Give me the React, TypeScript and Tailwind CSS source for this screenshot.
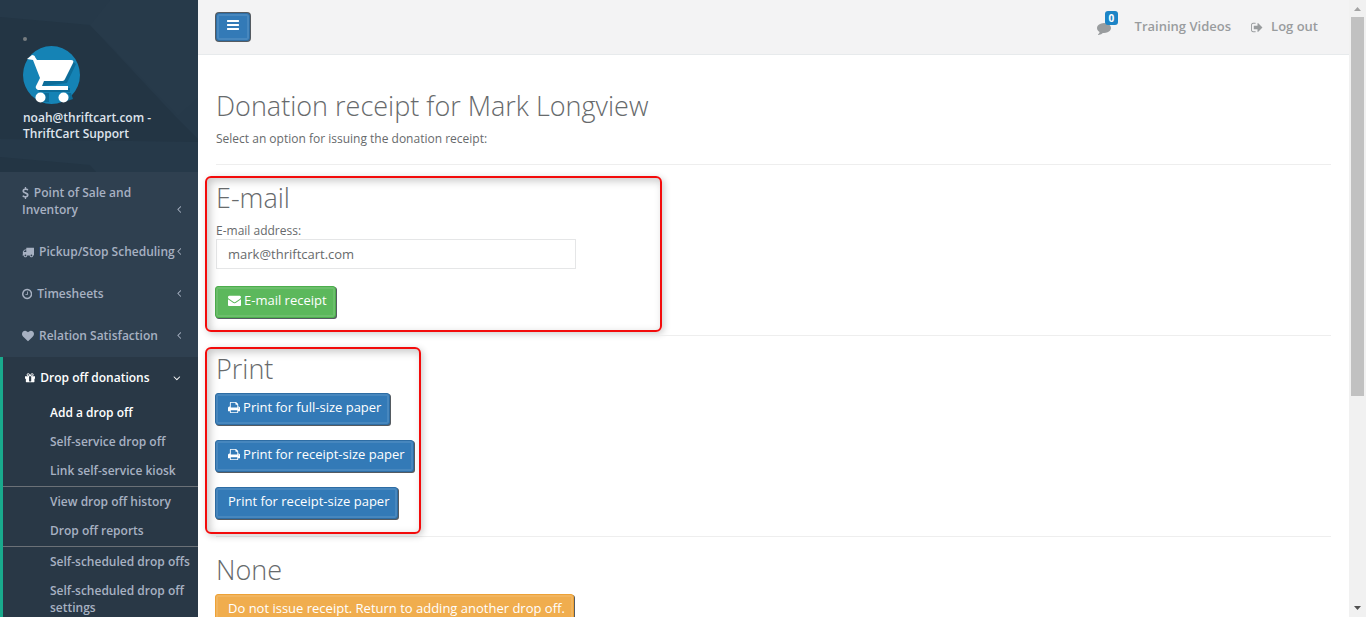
import React, { useState } from "react";
import clsx from "clsx";

// Icon outlines on a 1792 unit em, "x" and "w" crop each one to its own advance width
const ICONS = {
  dollar: {
    x: 384,
    w: 1024,
    d: "M1362 1185q0 153-99.5 263.5t-258.5 136.5v175q0 14-9 23t-23 9h-135q-13 0-22.5-9.5t-9.5-22.5v-175q-66-9-127.5-31t-101.5-44.5-74-48-46.5-37.5-17.5-18q-17-21-2-41l103-135q7-10 23-12 15-2 24 9l2 2q113 99 243 125 37 8 74 8 81 0 142.5-43t61.5-122q0-28-15-53t-33.5-42-58.5-37.5-66-32-80-32.5q-39-16-61.5-25t-61.5-26.5-62.5-31-56.5-35.5-53.5-42.5-43.5-49-35.5-58-21-66.5-8.5-78q0-138 98-242t255-134v-180q0-13 9.5-22.5t22.5-9.5h135q14 0 23 9t9 23v176q57 6 110.5 23t87 33.5 63.5 37.5 39 29 15 14q17 18 5 38l-81 146q-8 15-23 16-14 3-27-7-3-3-14.5-12t-39-26.5-58.5-32-74.5-26-85.5-11.5q-95 0-155 43t-60 111q0 26 8.5 48t29.5 41.5 39.5 33 56 31 60.5 27 70 27.5q53 20 81 31.5t76 35 75.5 42.5 62 50 53 63.5 31.5 76.5 13 94z",
  },
  truck: {
    x: 0,
    w: 1792,
    d: "M640 1408q0-52-38-90t-90-38-90 38-38 90 38 90 90 38 90-38 38-90zm-384-512h384v-256h-158q-13 0-22 9l-195 195q-9 9-9 22v30zm1280 512q0-52-38-90t-90-38-90 38-38 90 38 90 90 38 90-38 38-90zm256-1088v1024q0 15-4 26.5t-13.5 18.5-16.5 11.5-23.5 6-22.5 2-25.5 0-22.5-.5q0 106-75 181t-181 75-181-75-75-181h-384q0 106-75 181t-181 75-181-75-75-181h-64q-3 0-22.5.5t-25.5 0-22.5-2-23.5-6-16.5-11.5-13.5-18.5-4-26.5q0-26 19-45t45-19v-320q0-8-.5-35t0-38 2.5-34.5 6.5-37 14-30.5 22.5-30l198-198q19-19 50.5-32t58.5-13h160v-192q0-26 19-45t45-19h1024q26 0 45 19t19 45z",
  },
  clock: {
    x: 128,
    w: 1536,
    d: "M1024 544v448q0 14-9 23t-23 9h-320q-14 0-23-9t-9-23v-64q0-14 9-23t23-9h224v-352q0-14 9-23t23-9h64q14 0 23 9t9 23zm416 352q0-148-73-273t-198-198-273-73-273 73-198 198-73 273 73 273 198 198 273 73 273-73 198-198 73-273zm224 0q0 209-103 385.5t-279.5 279.5-385.5 103-385.5-103-279.5-279.5-103-385.5 103-385.5 279.5-279.5 385.5-103 385.5 103 279.5 279.5 103 385.5z",
  },
  heart: {
    x: 0,
    w: 1792,
    d: "M896 1664q-26 0-44-18l-624-602q-10-8-27.5-26t-55.5-65.5-68-97.5-53.5-121-23.5-138q0-220 127-344t351-124q62 0 126.5 21.5t120 58 95.5 68.5 76 68q36-36 76-68t95.5-68.5 120-58 126.5-21.5q224 0 351 124t127 344q0 221-229 450l-623 600q-18 18-44 18z",
  },
  gift: {
    x: 128,
    w: 1536,
    d: "M1056 1356v-716h-320v716q0 25 18 38.5t46 13.5h192q28 0 46-13.5t18-38.5zm-456-844h195l-126-161q-26-31-69-31-40 0-68 28t-28 68 28 68 68 28zm688-96q0-40-28-68t-68-28q-43 0-69 31l-125 161h194q40 0 68-28t28-68zm376 256v320q0 14-9 23t-23 9h-96v416q0 40-28 68t-68 28h-1088q-40 0-68-28t-28-68v-416h-96q-14 0-23-9t-9-23v-320q0-14 9-23t23-9h440q-93 0-158.5-65.5t-65.5-158.5 65.5-158.5 158.5-65.5q107 0 168 77l128 165 128-165q61-77 168-77 93 0 158.5 65.5t65.5 158.5-65.5 158.5-158.5 65.5h440q14 0 23 9t9 23z",
  },
  envelope: {
    x: 0,
    w: 1792,
    d: "M1792 710v794q0 66-47 113t-113 47h-1472q-66 0-113-47t-47-113v-794q44 49 101 87 362 246 497 345 57 42 92.5 65.5t94.5 48 110 24.5h2q51 0 110-24.5t94.5-48 92.5-65.5q170-123 498-345 57-39 100-87zm0-294q0 79-49 151t-122 123q-376 261-468 325-10 7-42.5 31t-54 38.5-52 32.5-57.5 27-50 9h-2q-23 0-50-9t-57.5-27-52-32.5-54-38.5-42.5-31q-91-64-262-182.5t-205-142.5q-62-42-117-115.5t-55-136.5q0-78 41.5-130t118.5-52h1472q65 0 112.5 47t47.5 113z",
  },
  print: {
    x: 64,
    w: 1664,
    d: "M448 1536h896v-256h-896v256zm0-640h896v-384h-160q-40 0-68-28t-28-68v-160h-640v640zm1152 64q0-26-19-45t-45-19-45 19-19 45 19 45 45 19 45-19 19-45zm128 0v416q0 13-9.5 22.5t-22.5 9.5h-224v160q0 40-28 68t-68 28h-960q-40 0-68-28t-28-68v-160h-224q-13 0-22.5-9.5t-9.5-22.5v-416q0-79 56.5-135.5t135.5-56.5h64v-544q0-40 28-68t68-28h672q40 0 88 20t76 48l152 152q28 28 48 76t20 88v256h64q79 0 135.5 56.5t56.5 135.5z",
  },
  signOut: {
    x: 64,
    w: 1664,
    d: "M704 1440q0 4 1 20t.5 26.5-3 23.5-10 19.5-20.5 6.5h-320q-119 0-203.5-84.5t-84.5-203.5v-704q0-119 84.5-203.5t203.5-84.5h320q13 0 22.5 9.5t9.5 22.5q0 4 1 20t.5 26.5-3 23.5-10 19.5-20.5 6.5h-320q-66 0-113 47t-47 113v704q0 66 47 113t113 47h312l11.5 1 11.5 3 8 5.5 7 9 2 13.5zm928-544q0 26-19 45l-544 544q-19 19-45 19t-45-19-19-45v-288h-448q-26 0-45-19t-19-45v-384q0-26 19-45t45-19h448v-288q0-26 19-45t45-19 45 19l544 544q19 19 19 45z",
  },
  comment: {
    x: 0,
    w: 1792,
    d: "M1792 896q0 174-120 321.5t-326 233-450 85.5q-70 0-145-8-198 175-460 242-49 14-114 22-17 2-30.5-9t-17.5-29v-1q-3-4-.5-12t2-10 4.5-9.5l6-9 7-8.5 8-9q7-8 31-34.5t34.5-38 31-39.5 32.5-51 27-59 26-76q-157-89-247.5-220t-90.5-281q0-130 71-248.5t191-204.5 286-136.5 348-50.5q244 0 450 85.5t326 233 120 321.5z",
  },
  bars: {
    x: 128,
    w: 1536,
    d: "M1664 1344v128q0 26-19 45t-45 19h-1408q-26 0-45-19t-19-45v-128q0-26 19-45t45-19h1408q26 0 45 19t19 45zm0-512v128q0 26-19 45t-45 19h-1408q-26 0-45-19t-19-45v-128q0-26 19-45t45-19h1408q26 0 45 19t19 45zm0-512v128q0 26-19 45t-45 19h-1408q-26 0-45-19t-19-45v-128q0-26 19-45t45-19h1408q26 0 45 19t19 45z",
  },
  angleLeft: {
    x: 576,
    w: 640,
    d: "M1203 544q0 13-10 23l-393 393 393 393q10 10 10 23t-10 23l-50 50q-10 10-23 10t-23-10l-466-466q-10-10-10-23t10-23l466-466q10-10 23-10t23 10l50 50q10 10 10 23z",
  },
  angleDown: {
    x: 320,
    w: 1152,
    d: "M1395 736q0 13-10 23l-466 466q-10 10-23 10t-23-10l-466-466q-10-10-10-23t10-23l50-50q10-10 23-10t23 10l393 393 393-393q10-10 23-10t23 10l50 50q10 10 10 23z",
  },
};

type IconName = keyof typeof ICONS;

function Icon({ name, className }: { name: IconName; className?: string }) {
  const icon = ICONS[name];
  return (
    <svg viewBox={`${icon.x} 0 ${icon.w} 1792`} className={clsx("inline-block w-auto shrink-0 fill-current", className)} aria-hidden="true">
      <path d={icon.d} />
    </svg>
  );
}

const navItems: { icon: IconName; label: string }[] = [
  { icon: "dollar", label: "Point of Sale and Inventory" },
  { icon: "truck", label: "Pickup/Stop Scheduling" },
  { icon: "clock", label: "Timesheets" },
  { icon: "heart", label: "Relation Satisfaction" },
];

const subItems = [
  { label: "Add a drop off", active: true },
  { label: "Self-service drop off" },
  { label: "Link self-service kiosk", divider: true },
  { label: "View drop off history" },
  { label: "Drop off reports", divider: true },
  { label: "Self-scheduled drop offs" },
  { label: "Self-scheduled drop off settings" },
];

function Logo() {
  return (
    <svg viewBox="0 0 57 58" className="h-[58px] w-[57px]" role="img" aria-label="ThriftCart">
      <ellipse cx="28.5" cy="29" rx="28.5" ry="29" fill="#1583b5" />
      <path d="M49 15l4 3-9 19-24 3 1 2h26v4H16l-2-6 6-5z" fill="#0d6c98" />
      <path d="M17 56l6-5-2-4h5v9zM41 56l6-6-3-3h4l2 6z" fill="#0d6c98" />
      <path
        d="M4 13L9 9c2 0 3 1 3 2l2 3h34c2 0 3 1 2 3l-8 16c-1 2-2 2-4 2H21l-2 5h26v4H16c-2 0-4-2-3-4l4-8-7-18z"
        fill="#fff"
      />
      <circle cx="17.500" cy="51.500" r="5" fill="#fff" />
      <circle cx="40.500" cy="51.500" r="5" fill="#fff" />
    </svg>
  );
}

function Sidebar() {
  return (
    <nav className="w-[198px] shrink-0 overflow-hidden bg-[#2f4050] text-[12px] leading-[17px] font-semibold text-[#a7b1c2]">
      <div className="relative bg-[#263949] px-[23px] pt-[46px] pb-[30px]">
        {/* faceted backdrop */}
        <svg viewBox="0 0 198 172" preserveAspectRatio="none" className="absolute inset-0 h-full w-full" aria-hidden="true">
          <path d="M0 17L90 25 175 116 198 139V142L0 139z" fill="#233544" />
          <path d="M90 25L110 0H198V98L178 116z" fill="#273a4a" />
          <path d="M0 157L90 165 96 172H0z" fill="#233544" />
          <circle cx="25" cy="39" r="2" fill="#777c80" />
        </svg>
        <div className="relative">
          <Logo />
          <a href="#profile" className="mt-[6px] block leading-4 text-[#dfe4ed]">
            noah@thriftcart.com -
            <br />
            ThriftCart Support
          </a>
        </div>
      </div>
      <ul>
        {navItems.map((item) => (
          <li key={item.label}>
            <a href="#menu" className="flex items-end pt-3 pr-[17px] pb-[13px] pl-[22px]">
              <span className="-mr-1 flex-1">
                <Icon name={item.icon} className="mr-[5px] h-3 align-[-2px]" />
                {item.label}
              </span>
              <Icon name="angleLeft" className="mb-[3px] h-3" />
            </a>
          </li>
        ))}
        <li className="border-l-3 border-[#19aa8d] bg-[#293846]">
          <a href="#drop-off" className="flex items-center py-3 pr-[17px] pl-[22px] text-white">
            <span className="flex-1">
              <Icon name="gift" className="mr-[5px] h-3 align-[-2px]" />
              Drop off donations
            </span>
            <Icon name="angleDown" className="h-3" />
          </a>
          <ul>
            {subItems.map((item) => (
              <li key={item.label} className={clsx(item.divider && "border-b border-[#6b7177] pb-px")}>
                <a href="#drop-off" className={clsx("block py-1.5 pr-1 pl-[47px]", item.active && "text-white")}>
                  {item.label}
                </a>
              </li>
            ))}
          </ul>
        </li>
      </ul>
    </nav>
  );
}

const buttonColors = {
  primary: "border-[#2e6da4] bg-[#337ab7]",
  success: "border-[#4cae4c] bg-[#5cb85c]",
  warning: "border-[#eea236] bg-[#f0ad4e]",
};

interface ActionButtonProps {
  color: keyof typeof buttonColors;
  icon?: IconName;
  children: React.ReactNode;
}

function ActionButton({ color, icon, children }: ActionButtonProps) {
  return (
    <button
      type="button"
      className={clsx(
        "-ml-px flex h-8 items-center gap-[3px] rounded-[3px] border pr-2 pb-[3px] pl-3 text-[13px] whitespace-nowrap text-white shadow-[inset_0_0_0_2px_rgba(255,255,255,0.1),1px_1px_0_#555b61]",
        buttonColors[color]
      )}
    >
      {icon && <Icon name={icon} className="h-[13px]" />}
      {children}
    </button>
  );
}

// Red frame drawn over a section
function Highlight({ className }: { className: string }) {
  return (
    <div
      className={clsx(
        "pointer-events-none absolute top-[11px] -left-[11px] rounded-md border-2 border-[#f30b0b] shadow-[2px_2px_7px_rgba(0,0,0,0.2),inset_3px_3px_8px_rgba(0,0,0,0.22)]",
        className
      )}
    />
  );
}

function Scrollbar() {
  return (
    <div className="flex w-[17px] shrink-0 flex-col items-center bg-[#f1f1f1]" aria-hidden="true">
      <svg viewBox="0 0 17 17" className="h-[17px] w-[17px] shrink-0">
        <path d="M5 11h7L8.500 7z" fill="#a3a3a3" />
      </svg>
      <div className="w-[13px] flex-[379] bg-[#c1c1c1]" />
      <div className="flex-[204]" />
      <svg viewBox="0 0 17 17" className="h-[17px] w-[17px] shrink-0">
        <path d="M5 6h7L8.500 10z" fill="#505050" />
      </svg>
    </div>
  );
}

export default function App() {
  const [email, setEmail] = useState("mark@thriftcart.com");

  return (
    <div className="flex h-screen overflow-hidden bg-white font-['Open_Sans',sans-serif] text-[12px] text-[#676a6c]">
      <Sidebar />
      <div className="min-w-0 flex-1 overflow-hidden">
        {/* Top bar */}
        <header className="flex h-[55px] items-center justify-between border-b border-[#e7eaec] bg-[#f3f3f4] pr-[31px] pl-[18px]">
          <button
            type="button"
            aria-label="Toggle menu"
            className="flex h-7 w-[34px] items-center justify-center rounded-[3px] border border-[#2e6da4] bg-[#337ab7] pb-1 text-white shadow-[inset_0_0_0_2px_rgba(255,255,255,0.1),0_0_0_1px_#555b61]"
          >
            <Icon name="bars" className="h-[14px]" />
          </button>
          <div className="flex items-center text-[13px] font-semibold text-[#999c9e]">
            <a href="#messages" aria-label="Messages" className="relative mr-6">
              <Icon name="comment" className="block h-[14px]" />
              <span className="absolute -top-2.5 left-2 mt-1 rounded-[3px] bg-[#1c84c6] px-1 text-[10px] leading-[14px] font-bold text-white">0</span>
            </a>
            <a href="#videos">Training Videos</a>
            <a href="#logout" className="ml-5 flex items-center gap-2">
              <Icon name="signOut" className="h-[13px]" />
              Log out
            </a>
          </div>
        </header>

        <main className="pt-[34px] pr-[18px] pl-[18px]">
          <h1 className="text-[27px] leading-[34px] font-light">Donation receipt for Mark Longview</h1>
          <p className="mt-[7px] leading-[18px]">Select an option for issuing the donation receipt:</p>

          {/* E-mail */}
          <section className="relative mt-4 h-[171px] border-t border-[#eee] pt-4">
            <h2 className="text-[27px] leading-[34px] font-light">E-mail</h2>
            <label htmlFor="email" className="mt-[7px] block leading-[17px]">
              E-mail address:
            </label>
            <input
              id="email"
              type="email"
              value={email}
              onChange={(e) => setEmail(e.target.value)}
              className="mb-[17px] block h-[30px] w-[360px] border border-[#e5e6e7] bg-white px-[11px] text-[13px] outline-none"
            />
            <ActionButton color="success" icon="envelope">
              E-mail receipt
            </ActionButton>
            <Highlight className="h-[156px] w-[457px]" />
          </section>

          {/* Print */}
          <section className="relative h-[201px] border-t border-[#eee] pt-4">
            <h2 className="text-[27px] leading-[34px] font-light">Print</h2>
            <div className="mt-[7px] flex flex-col items-start gap-[15px]">
              <ActionButton color="primary" icon="print">
                Print for full-size paper
              </ActionButton>
              <ActionButton color="primary" icon="print">
                Print for receipt-size paper
              </ActionButton>
              <ActionButton color="primary">Print for receipt-size paper</ActionButton>
            </div>
            <Highlight className="h-[187px] w-[216px]" />
          </section>

          {/* None */}
          <section className="border-t border-[#eee] pt-4">
            <h2 className="mb-[7px] text-[27px] leading-[34px] font-light">None</h2>
            <ActionButton color="warning">Do not issue receipt. Return to adding another drop off.</ActionButton>
          </section>
        </main>
      </div>
      <Scrollbar />
    </div>
  );
}
